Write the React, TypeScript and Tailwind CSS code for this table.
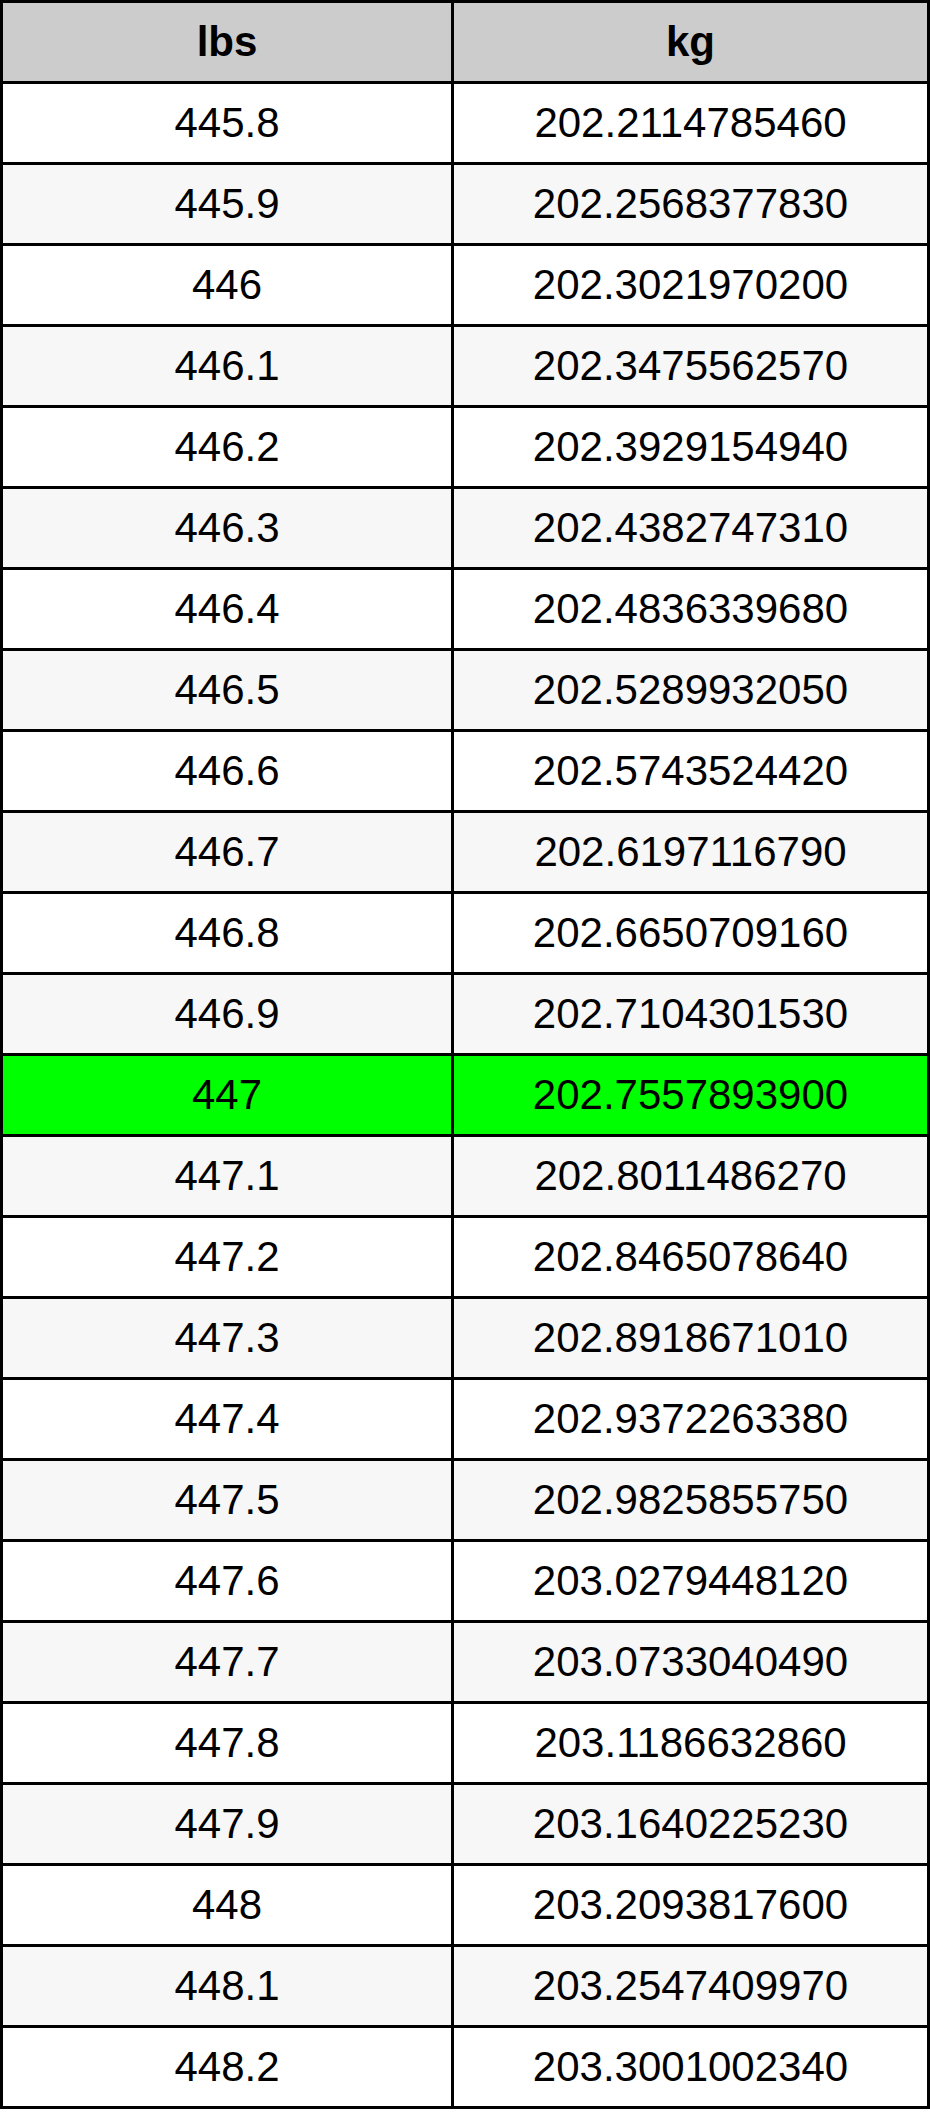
const rows: [string, string][] = [
  ["445.8", "202.2114785460"],
  ["445.9", "202.2568377830"],
  ["446", "202.3021970200"],
  ["446.1", "202.3475562570"],
  ["446.2", "202.3929154940"],
  ["446.3", "202.4382747310"],
  ["446.4", "202.4836339680"],
  ["446.5", "202.5289932050"],
  ["446.6", "202.5743524420"],
  ["446.7", "202.6197116790"],
  ["446.8", "202.6650709160"],
  ["446.9", "202.7104301530"],
  ["447", "202.7557893900"],
  ["447.1", "202.8011486270"],
  ["447.2", "202.8465078640"],
  ["447.3", "202.8918671010"],
  ["447.4", "202.9372263380"],
  ["447.5", "202.9825855750"],
  ["447.6", "203.0279448120"],
  ["447.7", "203.0733040490"],
  ["447.8", "203.1186632860"],
  ["447.9", "203.1640225230"],
  ["448", "203.2093817600"],
  ["448.1", "203.2547409970"],
  ["448.2", "203.3001002340"],
];

export default function App() {
  return (
    <div className="w-[930px] bg-white font-['Liberation_Sans',Arial,sans-serif] text-black">
      <table className="w-full border-collapse border-[3px] border-black text-[42px] leading-none">
        <thead>
          <tr className="h-[81px] bg-[#cccccc]">
            <th className="w-[451px] border-[3px] border-black text-center font-bold">lbs</th>
            <th className="border-[3px] border-black text-center font-bold">kg</th>
          </tr>
        </thead>
        <tbody>
          {rows.map(([lbs, kg], i) => {
            // the converted value is marked green, other rows alternate
            const bg = lbs === "447" ? "bg-[#00ff00]" : i % 2 === 0 ? "bg-white" : "bg-[#f7f7f7]";
            return (
              <tr key={lbs} className={`h-[81px] ${bg}`}>
                <td className="border-[3px] border-black text-center">{lbs}</td>
                <td className="border-[3px] border-black text-center">{kg}</td>
              </tr>
            );
          })}
        </tbody>
      </table>
    </div>
  );
}
